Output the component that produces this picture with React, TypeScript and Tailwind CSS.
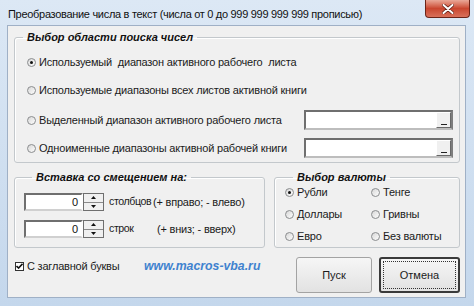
import React from "react";

const sans = "font-['Liberation_Sans',Arial,sans-serif]";

function Radio({ checked }: { checked?: boolean }) {
  return (
    <span className="w-[9px] h-[9px] rounded-full border border-[#8a8c8e] bg-gradient-to-br from-[#d8d8d8] to-[#fdfdfd] flex items-center justify-center shrink-0">
      {checked && <span className="w-[3px] h-[3px] rounded-full bg-[#111]" />}
    </span>
  );
}

function RadioRow({ label, checked, box }: { label: string; checked?: boolean; box?: boolean }) {
  return (
    <div className="h-[20px] flex items-center pl-[12px] pr-[6px]">
      <Radio checked={checked} />
      <span className="ml-[3px] whitespace-pre text-[11px] tracking-[-0.2px] text-[#1b1b1b]">{label}</span>
      {box && (
        <div className="ml-auto w-[149px] h-[20px] bg-white border-2 border-t-[#6f6f6f] border-l-[#6f6f6f] border-r-[#7d7d7d] border-b-[#bdbdbd] flex justify-end">
          <div className="w-[15px] h-full bg-[#f0f0f0] border-l border-t border-l-white border-t-white border-r border-b border-r-[#696969] border-b-[#696969] flex items-end justify-center pb-[2px]">
            <span className="w-[6px] h-[1px] bg-[#222]" />
          </div>
        </div>
      )}
    </div>
  );
}

function Spin({ label, hint, labelW }: { label: string; hint: string; labelW: string }) {
  return (
    <div className="h-[18px] flex items-center">
      <div className="w-[59px] h-[18px] bg-white border-2 border-t-[#6f6f6f] border-l-[#6f6f6f] border-r-transparent border-b-[#d0d0d0] text-right pr-[3px] text-[11px] leading-[14px] text-[#111]">
        0
      </div>
      <div className="w-[21px] h-[18px] flex flex-col border border-[#6f6f6f] bg-[#f0f0f0]">
        <div className="flex-1 flex items-center justify-center border-b border-[#8a8a8a]">
          <svg width="5" height="3" viewBox="0 0 5 3"><path d="M2.5 0L5 3H0z" fill="#111" /></svg>
        </div>
        <div className="flex-1 flex items-center justify-center">
          <svg width="5" height="3" viewBox="0 0 5 3"><path d="M0 0h5L2.5 3z" fill="#111" /></svg>
        </div>
      </div>
      <span className={`ml-[5px] ${labelW} shrink-0 whitespace-nowrap text-[10.6px] tracking-[-0.4px] text-[#1b1b1b]`}>{label}</span>
      <span className="text-[11px] tracking-[-0.2px] text-[#1b1b1b] whitespace-pre">{hint}</span>
    </div>
  );
}

function Legend({ children }: { children: React.ReactNode }) {
  return (
    <legend className="ml-[8px] px-[4px] text-[11px] leading-[14px] font-bold italic text-[#111]">{children}</legend>
  );
}

export default function App() {
  return (
    <div className={`${sans} w-[474px] h-[306px] overflow-hidden bg-gradient-to-b from-[#dce8f5] to-[#c4d7ec] flex flex-col`}>
      {/* title bar */}
      <div className="h-[25px] flex items-start shrink-0">
        <span className="pl-[8px] pt-[7px] text-[11px] tracking-[-0.3px] leading-[14px] text-[#111]">
          Преобразование числа в текст (числа от 0 до 999 999 999 999 прописью)
        </span>
        <div className="ml-auto mr-[4px] w-[45px] h-[18px] rounded-b-[4px] border border-t-0 border-[#6b2418] bg-gradient-to-b from-[#e9a898] via-[#c9462f] to-[#d9705a] flex items-center justify-center">
          <svg width="12" height="10" viewBox="0 0 12 10">
            <path d="M1.5 1L10.5 9M10.5 1L1.5 9" stroke="#5a1c12" strokeWidth="3.4" strokeLinecap="round" />
            <path d="M1.5 1L10.5 9M10.5 1L1.5 9" stroke="#fff" strokeWidth="2" strokeLinecap="round" />
          </svg>
        </div>
      </div>

      {/* client area */}
      <div className="mx-[7px] w-[459px] h-[273px] bg-[#f0f0f0] border border-[#9fb0c6] pl-[6px] pr-[5px] pt-[4px]">
        <fieldset className="border border-[#c3c8cc] rounded-[3px] pt-[8px] pb-[4px] shadow-[inset_1px_1px_0_#fff]">
          <Legend>Выбор области поиска чисел</Legend>
          <RadioRow label="Используемый  диапазон активного рабочего  листа" checked />
          <div className="mt-[8px]">
            <RadioRow label="Используемые диапазоны всех листов активной книги" />
          </div>
          <div className="mt-[10px]">
            <RadioRow label="Выделенный диапазон активного рабочего листа" box />
          </div>
          <div className="mt-[8px]">
            <RadioRow label="Одноименные диапазоны активной рабочей книги" box />
          </div>
        </fieldset>

        <div className="mt-[7px] flex gap-[9px]">
          <fieldset className="w-[251px] h-[78px] border border-[#c3c8cc] rounded-[3px] pt-[9px] pl-[9px] shadow-[inset_1px_1px_0_#fff]">
            <Legend>Вставка со смещением на:</Legend>
            <div className="flex flex-col gap-[9px]">
              <Spin label="столбцов" hint="(+ вправо; - влево)" labelW="w-[44px]" />
              <Spin label="строк" hint="(+ вниз; - вверх)" labelW="w-[48px]" />
            </div>
          </fieldset>
          <fieldset className="w-[186px] h-[78px] border border-[#c3c8cc] rounded-[3px] pl-[10px] shadow-[inset_1px_1px_0_#fff]">
            <Legend>Выбор валюты</Legend>
            <div className="grid grid-cols-[86px_86px] gap-y-[6px]">
              {[
                ["Рубли", true],
                ["Тенге", false],
                ["Доллары", false],
                ["Гривны", false],
                ["Евро", false],
                ["Без валюты", false],
              ].map(([t, c]) => (
                <div key={t as string} className="h-[16px] flex items-center">
                  <Radio checked={c as boolean} />
                  <span className="ml-[3px] text-[11px] tracking-[-0.2px] text-[#1b1b1b]">{t as string}</span>
                </div>
              ))}
            </div>
          </fieldset>
        </div>

        <div className="mt-[9px] flex items-start">
          <div className="w-[130px] h-[18px] pl-[1px] flex items-center">
            <span className="w-[9px] h-[9px] border border-[#333] bg-white flex items-center justify-center">
              <svg width="7" height="6" viewBox="0 0 7 6"><path d="M0.5 3L2.6 5L6.5 0.8" stroke="#111" strokeWidth="1.6" fill="none" /></svg>
            </span>
            <span className="ml-[3px] text-[11px] tracking-[-0.2px] text-[#1b1b1b]">С заглавной буквы</span>
          </div>
          <div className="h-[18px] flex items-center text-[12.3px] font-bold italic text-[#3f82cf]">
            www.macros-vba.ru
          </div>
          <button className="ml-auto w-[76px] h-[36px] rounded-[3px] border border-[#a3a3a3] bg-gradient-to-b from-[#f6f6f6] to-[#e2e2e2] text-[11px] text-[#1b1b1b]">
            Пуск
          </button>
          <button className="ml-[7px] w-[81px] h-[36px] rounded-[3px] border-2 border-[#3a3a3a] bg-gradient-to-b from-[#f6f6f6] to-[#e2e2e2] p-[2px] text-[11px] text-[#1b1b1b]">
            <span className="w-full h-full border border-dotted border-[#333] flex items-center justify-center">Отмена</span>
          </button>
        </div>
      </div>
    </div>
  );
}
